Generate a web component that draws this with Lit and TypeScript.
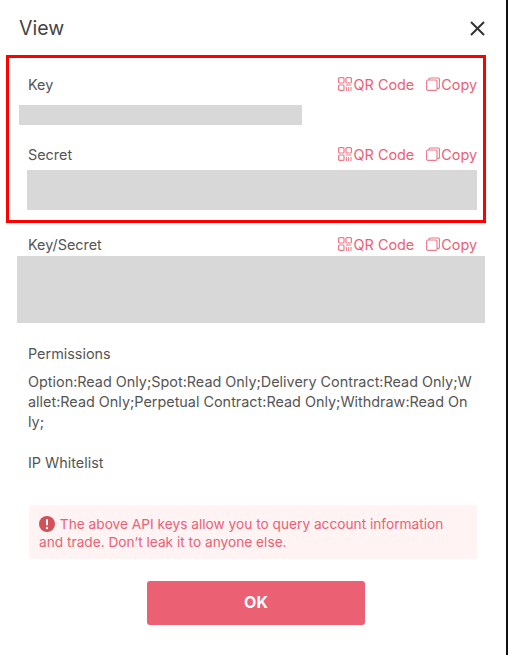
import { LitElement, html, css } from "lit";
import { customElement } from "lit/decorators.js";

const qr = html`<svg class="ic" viewBox="0 0 14 14" fill="none" stroke="currentColor" stroke-width="1.2"><rect x="0.6" y="0.6" width="5.4" height="5.4" rx="1"/><rect x="8" y="0.6" width="5.4" height="5.4" rx="1"/><rect x="0.6" y="8" width="5.4" height="5.4" rx="1"/><path d="M8 8h5.4M8.4 10v4M10.7 10v4M13 10v4" stroke-width="1"/></svg>`;
const copy = html`<svg class="ic" viewBox="0 0 14 14" fill="none" stroke="currentColor" stroke-width="1.1"><rect x="0.6" y="3" width="10.4" height="10.4" rx="1.5"/><path d="M3 3V2a1 1 0 0 1 1-1h8.4a1 1 0 0 1 1 1v8.4a1 1 0 0 1-1 1H11"/></svg>`;

@customElement("app-root")
export class AppRoot extends LitElement {
  static styles = css`
    :host { display: block; width: 509px; height: 655px; background: #fff; font-family: "Inter", "Noto Sans", sans-serif; color: #555; overflow: hidden; }
    .page { height: 655px; display: flex; flex-direction: column; box-sizing: border-box; width: 508px; border-right: 2px solid #111; }
    .head { display: flex; justify-content: space-between; align-items: center; height: 55px; padding: 0 21px 0 19px; flex: none; }
    .title { font-size: 19.5px; color: #444; }
    .x { width: 15px; height: 15px; margin-top: 2px; }
    .box { border: 3px solid #f00; margin: 0 20px 0 6px; height: 168px; box-sizing: border-box; padding-top: 14px; flex: none; display: flex; flex-direction: column; }
    .row { display: flex; justify-content: space-between; align-items: center; height: 24px; padding-left: 19px; padding-right: 6px; font-size: 14.4px; color: #555; flex: none; }
    .acts { display: flex; gap: 12px; color: #ec6074; }
    .act { display: flex; align-items: center; gap: 2px; font-size: 14.4px; }
    .act.c { gap: 1px; }
    .ic { width: 14px; height: 14px; flex: none; opacity: 0.85; }
    .gray { background: #d8d8d8; flex: none; }
    .k { width: 283px; height: 20px; margin: 9px 0 0 10px; }
    .s { height: 40px; margin: 4px 6px 0 18px; }
    .row2 { margin-top: 17px; }
    .row3 { padding-left: 28px; padding-right: 29px; margin-top: 9px; height: 24px; }
    .ks { height: 67px; margin: 0 21px 0 17px; }
    .perm { font-size: 14.4px; padding: 22px 20px 0 28px; color: #555; line-height: 17px; }
    .perm p { margin: 0; }
    .val { margin-top: 10px !important; line-height: 20px; white-space: nowrap; }
    .ip { margin-top: 22px !important; }
    .warn { margin: 34px 29px 0 29px; background: #fff3f3; border-radius: 2px; padding: 10px 10px 0 10px; height: 54px; box-sizing: border-box; color: #ec6074; font-size: 13.7px; line-height: 18px; flex: none; }
    .warn svg { width: 16px; height: 16px; vertical-align: -3px; margin-right: 1px; }
    .btn { width: 218px; height: 44px; margin: 22px 0 0 147px; padding-bottom: 3px; box-sizing: border-box; background: #eb6073; color: #fff; border-radius: 3px; font-size: 16px; font-weight: 700; display: flex; align-items: center; justify-content: center; flex: none; }
  `;

  private actions() {
    return html`<div class="acts"><span class="act">${qr}QR Code</span><span class="act c">${copy}Copy</span></div>`;
  }

  render() {
    return html`<div class="page">
      <div class="head">
        <span class="title">View</span>
        <svg class="x" viewBox="0 0 15 15" fill="none" stroke="#333" stroke-width="2"><path d="M1 1l13 13M14 1L1 14"/></svg>
      </div>
      <div class="box">
        <div class="row"><span>Key</span>${this.actions()}</div>
        <div class="gray k"></div>
        <div class="row row2"><span>Secret</span>${this.actions()}</div>
        <div class="gray s"></div>
      </div>
      <div class="row row3"><span>Key/Secret</span>${this.actions()}</div>
      <div class="gray ks"></div>
      <div class="perm">
        <p>Permissions</p>
        <p class="val">Option:Read Only;Spot:Read Only;Delivery Contract:Read Only;W<br>allet:Read Only;Perpetual Contract:Read Only;Withdraw:Read On<br>ly;</p>
        <p class="ip">IP Whitelist</p>
      </div>
      <div class="warn"><svg viewBox="0 0 16 16"><circle cx="8" cy="8" r="8" fill="#d1505a"/><rect x="7" y="3" width="2" height="6.5" rx="1" fill="#fff"/><circle cx="8" cy="12" r="1.2" fill="#fff"/></svg> The above API keys allow you to query account information and trade. Don’t leak it to anyone else.</div>
      <div class="btn">OK</div>
    </div>`;
  }
}
